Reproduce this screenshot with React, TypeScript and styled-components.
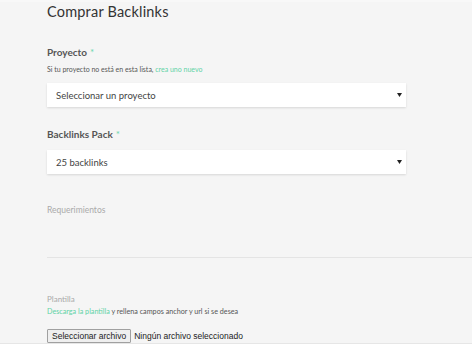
import React from "react";
import styled, { createGlobalStyle } from "styled-components";

const GlobalStyle = createGlobalStyle`
  html, body {
    margin: 0;
    padding: 0;
    background: #ffffff;
  }
  body {
    font-family: Lato, "Open Sans", sans-serif;
  }
`;

const Panel = styled.div`
  width: 472px;
  height: 344px;
  background: #f5f5f5;
  border-top: 2px solid #f8f8f8;
  border-bottom: 1px solid #e6e6e6;
  box-sizing: border-box;
  overflow: hidden;
`;

const Inner = styled.div`
  padding: 0 0 0 47px;
  display: flex;
  flex-direction: column;
`;

const Title = styled.h1`
  margin: 0;
  font-family: Lato, sans-serif;
  font-weight: 400;
  font-size: 14.5px;
  line-height: 20px;
  color: #333;
  letter-spacing: 0.2px;
`;

const Label = styled.div<{ $top: number }>`
  margin-top: ${(p) => p.$top}px;
  font-size: 10px;
  line-height: 14px;
  font-weight: 700;
  color: #555;
`;

const Star = styled.span`
  color: #6ad7ae;
  margin-left: 3px;
  font-weight: 400;
`;

const Hint = styled.div`
  margin-top: 5px;
  font-size: 7px;
  line-height: 10px;
  color: #555;
`;

const Link = styled.a`
  color: #5fd3a6;
  text-decoration: none;
`;

const Select = styled.div<{ $top: number }>`
  margin-top: ${(p) => p.$top}px;
  width: 359px;
  height: 24px;
  box-sizing: border-box;
  background: #ffffff;
  box-shadow: 0 1px 2px rgba(0, 0, 0, 0.12);
  display: flex;
  align-items: center;
  justify-content: space-between;
  padding: 0 4px 0 9px;
  font-size: 9.5px;
  color: #444;
`;

const Caret = () => (
  <svg width="5" height="4" viewBox="0 0 5 4">
    <path d="M0 0 H5 L2.5 4 Z" fill="#222" />
  </svg>
);

const Muted = styled.div<{ $top: number; $size: number }>`
  margin-top: ${(p) => p.$top}px;
  font-size: ${(p) => p.$size}px;
  line-height: 12px;
  color: #aaa;
`;

const Divider = styled.div`
  margin-top: 41px;
  height: 1px;
  background: #e4e4e4;
`;

const Note = styled.div`
  margin-top: 1px;
  font-size: 7.2px;
  line-height: 12px;
  color: #555;
`;

const FileRow = styled.div`
  margin-top: 11px;
  display: flex;
  align-items: center;
  gap: 3px;
  font-family: "Liberation Sans", Arial, sans-serif;
  font-size: 8.5px;
  color: #222;
`;

const FileButton = styled.button`
  font-family: inherit;
  font-size: 8.5px;
  color: #222;
  background: #efefef;
  border: 1px solid #a0a0a0;
  border-radius: 1px;
  padding: 0 4px;
  height: 14px;
  line-height: 12px;
`;

export default function App() {
  return (
    <>
      <GlobalStyle />
      <Panel>
        <Inner>
          <Title>Comprar Backlinks</Title>
          <Label $top={23}>
            Proyecto<Star>*</Star>
          </Label>
          <Hint>
            Si tu proyecto no está en esta lista, <Link href="#">crea uno nuevo</Link>
          </Hint>
          <Select $top={9}>
            <span>Seleccionar un proyecto</span>
            <Caret />
          </Select>
          <Label $top={20}>
            Backlinks Pack<Star>*</Star>
          </Label>
          <Select $top={9}>
            <span>25 backlinks</span>
            <Caret />
          </Select>
          <Muted $top={30} $size={8.5}>
            Requerimientos
          </Muted>
          <Divider />
          <Muted $top={35} $size={8}>
            Plantilla
          </Muted>
          <Note>
            <Link href="#">Descarga la plantilla</Link> y rellena campos anchor y url si se desea
          </Note>
          <FileRow>
            <FileButton>Seleccionar archivo</FileButton>
            <span>Ningún archivo seleccionado</span>
          </FileRow>
        </Inner>
      </Panel>
    </>
  );
}
